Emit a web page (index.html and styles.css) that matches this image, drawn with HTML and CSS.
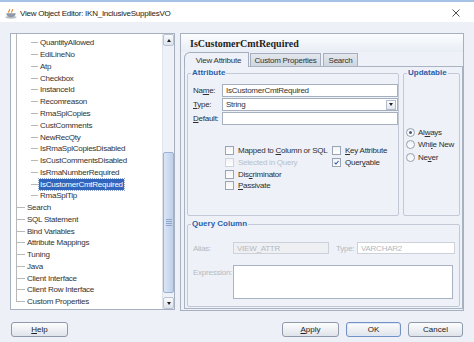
FILE: index.html
```html
<!DOCTYPE html>
<html lang="en">
<head>
    <meta charset="UTF-8">
    <title>View Object Editor</title>
    <link rel="stylesheet" href="styles.css">
</head>
<body>
    <div class="window">
        <div class="titlebar">
            <svg class="app-icon" viewBox="0 0 12 11">
                <ellipse cx="6" cy="9.3" rx="5.6" ry="1.4" fill="#b9c0c9"/>
                <path d="M1.2 5.2 H10.8 C10.6 8 8.5 9.2 6 9.2 C3.5 9.2 1.4 8 1.2 5.2 Z" fill="#8f99a6"/>
                <path d="M3.6 4.6 C3.2 3.2 5 2.8 4.6 1.2 M6.6 4.6 C6.2 3.2 8 2.8 7.6 1.2" stroke="#e07a1c" stroke-width="1.1" fill="none"/>
            </svg>
            <span class="title">View Object Editor: IKN_InclusiveSuppliesVO</span>
            <svg class="close" viewBox="0 0 8 8">
                <path d="M0.5 0.5 L7.5 7.5 M7.5 0.5 L0.5 7.5" stroke="#505050" stroke-width="1"/>
            </svg>
        </div>

        <div class="main">
            <div class="tree">
                <ul class="nodes">
                    <li class="child">QuantityAllowed</li>
                    <li class="child">EdiLineNo</li>
                    <li class="child">Atp</li>
                    <li class="child">Checkbox</li>
                    <li class="child">InstanceId</li>
                    <li class="child">Recomreason</li>
                    <li class="child">RmaSplCopies</li>
                    <li class="child">CustComments</li>
                    <li class="child">NewRecQty</li>
                    <li class="child">IsRmaSplCopiesDisabled</li>
                    <li class="child">IsCustCommentsDisabled</li>
                    <li class="child">IsRmaNumberRequired</li>
                    <li class="child"><span class="selected">IsCustomerCmtRequired</span></li>
                    <li class="child">RmaSplTip</li>
                    <li>Search</li>
                    <li>SQL Statement</li>
                    <li>Bind Variables</li>
                    <li>Attribute Mappings</li>
                    <li>Tuning</li>
                    <li>Java</li>
                    <li>Client Interface</li>
                    <li>Client Row Interface</li>
                    <li>Custom Properties</li>
                </ul>
                <div class="scrollbar">
                    <div class="sb-btn up"></div>
                    <div class="sb-track"><div class="sb-thumb"><span></span></div></div>
                    <div class="sb-btn down"></div>
                </div>
            </div>

            <div class="editor">
                <div class="editor-head">IsCustomerCmtRequired</div>
                <div class="tabs">
                    <span class="tab active">View Attribute</span>
                    <span class="tab props">Custom Properties</span>
                    <span class="tab search">Search</span>
                </div>
                <div class="panel">
                    <div class="top-row">
                        <fieldset class="group attr">
                            <legend>Attribute</legend>
                            <div class="field first">
                                <label>Na<u>m</u>e:</label>
                                <div class="input">IsCustomerCmtRequired</div>
                            </div>
                            <div class="field">
                                <label><u>T</u>ype:</label>
                                <div class="input combo">String<span class="drop"></span></div>
                            </div>
                            <div class="field">
                                <label><u>D</u>efault:</label>
                                <div class="input"></div>
                            </div>
                            <div class="checks">
                                <div class="check"><span class="box"></span><span>Mapped to <u>C</u>olumn or SQL</span></div>
                                <div class="check"><span class="box"></span><span><u>K</u>ey Attribute</span></div>
                                <div class="check disabled"><span class="box"></span><span>Selected in Query</span></div>
                                <div class="check"><span class="box on"><svg viewBox="0 0 9 9"><path d="M2 4.6 L3.8 6.4 L7.1 2.6" stroke="#2552a0" stroke-width="1.3" fill="none"/></svg></span><span>Quer<u>y</u>able</span></div>
                                <div class="check"><span class="box"></span><span>Dis<u>c</u>riminator</span></div>
                                <div class="check"></div>
                                <div class="check"><span class="box"></span><span><u>P</u>assivate</span></div>
                            </div>
                        </fieldset>
                        <fieldset class="group updatable">
                            <legend>Updatable</legend>
                            <div class="radios">
                                <div class="radio"><span class="dot on"></span><span>Al<u>w</u>ays</span></div>
                                <div class="radio"><span class="dot"></span><span>Whi<u>l</u>e New</span></div>
                                <div class="radio"><span class="dot"></span><span>Ne<u>v</u>er</span></div>
                            </div>
                        </fieldset>
                    </div>
                    <fieldset class="group query">
                        <legend>Query Column</legend>
                        <div class="qrow">
                            <label class="qlabel">Alias:</label>
                            <div class="input dim alias">VIEW_ATTR</div>
                            <label class="qlabel type">Type:</label>
                            <div class="input dim sqltype">VARCHAR2</div>
                        </div>
                        <div class="qrow expr">
                            <label class="qlabel">Expression:</label>
                            <div class="textarea"></div>
                        </div>
                    </fieldset>
                </div>
            </div>
        </div>

        <div class="footer">
            <button class="btn"><u>H</u>elp</button>
            <div class="actions">
                <button class="btn apply"><u>A</u>pply</button>
                <button class="btn ok">OK</button>
                <button class="btn cancel">Cancel</button>
            </div>
        </div>
    </div>
</body>
</html>
```

FILE: styles.css
```css
* {
    margin: 0;
    padding: 0;
    box-sizing: border-box;
}

body {
    width: 474px;
    height: 342px;
    overflow: hidden;
    background: #edf0f6;
    font-family: "Liberation Sans", Arial, sans-serif;
    font-size: 8px;
    letter-spacing: -0.25px;
    color: #2e2e2e;
}

u {
    text-decoration: underline;
    text-underline-offset: 1px;
}

.window {
    border-top: 2px solid #a6c2e7;
}

/* title bar */
.titlebar {
    height: 20px;
    background: #fff;
    display: flex;
    align-items: center;
    padding: 2px 14px 0 5px;
}

.app-icon {
    width: 12px;
    height: 11px;
    margin-right: 3px;
}

.title {
    flex: 1;
    color: #222;
}

.close {
    width: 8px;
    height: 8px;
}

.main {
    display: flex;
    gap: 5px;
    padding: 11px 0 0 10px;
}

/* navigator tree */
.tree {
    width: 165px;
    height: 277px;
    border: 1px solid #a7b0bf;
    background: #fff;
    display: flex;
}

.nodes {
    list-style: none;
    flex: 1;
    padding-top: 3px;
    overflow: hidden;
    background: linear-gradient(#b8b8b8, #b8b8b8) 5px 0 / 1px 268px no-repeat;
}

.nodes li {
    height: 11.77px;
    display: flex;
    align-items: center;
    white-space: nowrap;
    color: #333;
}

.nodes li::before {
    content: "";
    flex: none;
    width: 8px;
    border-top: 1px solid #b8b8b8;
    margin: 0 2px 0 6px;
}

.nodes li.child::before {
    width: 7px;
    margin-left: 20px;
}

.selected {
    background: #3165be;
    color: #fff;
    line-height: 11px;
    padding: 0 1px;
    margin-left: -1px;
    outline: 1px dotted #8fa6cc;
}

.scrollbar {
    width: 12px;
    display: flex;
    flex-direction: column;
    background: #eef2f8;
    border-left: 1px solid #dfe4ec;
}

.sb-btn {
    height: 12px;
    border: 1px solid #bac4d3;
    border-radius: 2px;
    background: linear-gradient(#f9fafc, #dde3ec);
    display: flex;
    align-items: center;
    justify-content: center;
}

.sb-btn::after {
    content: "";
    border-left: 2.5px solid transparent;
    border-right: 2.5px solid transparent;
}

.sb-btn.up::after {
    border-bottom: 3px solid #222;
}

.sb-btn.down::after {
    border-top: 3px solid #222;
}

.sb-track {
    flex: 1;
    padding-top: 106px;
}

.sb-thumb {
    height: 141px;
    border: 1px solid #9db1d3;
    border-radius: 2px;
    background: linear-gradient(to right, #dbe5f5, #bfd0ec);
    display: flex;
    align-items: center;
    justify-content: center;
}

.sb-thumb span {
    width: 6px;
    height: 7px;
    background: repeating-linear-gradient(#8ea4c8 0 1px, transparent 1px 2px);
}

/* attribute editor */
.editor {
    width: 284px;
    height: 278px;
    border: 1px solid #a7b0bf;
    background: #eef2f8;
    display: flex;
    flex-direction: column;
}

.editor-head {
    height: 18px;
    flex: none;
    display: flex;
    align-items: center;
    padding-left: 9px;
    font: bold 10px "Liberation Serif", "Times New Roman", serif;
    letter-spacing: 0;
    color: #1e1e1e;
    background: linear-gradient(#fbfcfe, #e8edf5);
}

.tabs {
    height: 14px;
    flex: none;
    display: flex;
    align-items: flex-end;
    margin-left: 3px;
}

.tab {
    height: 13px;
    border: 1px solid #a4aebe;
    border-bottom: 0;
    background: linear-gradient(#e3e7ed, #d0d6e0);
    display: flex;
    align-items: center;
    justify-content: center;
    color: #333;
}

.tab.active {
    width: 65px;
    height: 15px;
    margin-bottom: -1px;
    padding-left: 4px;
    background: #eef2f8;
    border-top-left-radius: 6px;
    position: relative;
    z-index: 1;
}

.tab.props {
    width: 71px;
    margin-left: 1px;
}

.tab.search {
    width: 35px;
    margin-left: 2px;
}

.panel {
    flex: 1;
    margin: 0 0 1px 3px;
    border: 1px solid #aab3c2;
    padding: 1px 2px 0 2px;
}

.top-row {
    display: flex;
    gap: 4px;
}

.group {
    min-width: 0;
    border: 1px solid #c2c9d5;
    border-radius: 2px;
    padding: 0;
}

.group legend {
    margin-left: 3px;
    padding: 0 1px;
    line-height: 10px;
    font-weight: bold;
    letter-spacing: 0;
    color: #2d5ea9;
}

.attr {
    width: 212px;
    height: 148px;
}

.updatable {
    width: 57px;
    height: 148px;
}

.field {
    display: flex;
    align-items: center;
    height: 13px;
    margin-bottom: 1px;
    padding-left: 5px;
}

.field.first {
    margin-top: 6px;
}

.field label {
    width: 29px;
    flex: none;
}

.input {
    flex: 1;
    height: 13px;
    border: 1px solid #a6afbd;
    background: #fff;
    padding-left: 3px;
    display: flex;
    align-items: center;
    color: #333;
}

.combo {
    justify-content: space-between;
    padding-right: 1px;
}

.drop {
    width: 10px;
    height: 10px;
    border: 1px solid #b4bccb;
    background: linear-gradient(#fbfcfd, #e1e6ee);
    display: flex;
    align-items: center;
    justify-content: center;
}

.drop::after {
    content: "";
    border-left: 2.5px solid transparent;
    border-right: 2.5px solid transparent;
    border-top: 3px solid #222;
}

.checks {
    display: grid;
    grid-template-columns: 107px auto;
    grid-auto-rows: 11.7px;
    margin-top: 20px;
    padding-left: 37px;
}

.check {
    display: flex;
    align-items: center;
    gap: 4px;
    white-space: nowrap;
}

.check.disabled {
    color: #b9bec6;
}

.box {
    width: 9px;
    height: 9px;
    flex: none;
    border: 1px solid #9aa4b3;
    background: linear-gradient(#f1f3f6, #fff);
    display: flex;
}

.check.disabled .box {
    border-color: #d0d5dc;
}

.box svg {
    width: 7px;
    height: 7px;
}

.radios {
    margin-top: 48px;
    padding-left: 2px;
}

.radio {
    height: 12.5px;
    display: flex;
    align-items: center;
    gap: 3px;
    white-space: nowrap;
}

.dot {
    width: 9px;
    height: 9px;
    flex: none;
    border: 1px solid #95a0b0;
    border-radius: 50%;
    background: linear-gradient(#eef1f5, #fff);
    display: flex;
    align-items: center;
    justify-content: center;
}

.dot.on::after {
    content: "";
    width: 3px;
    height: 3px;
    border-radius: 50%;
    background: #4b5a72;
}

.query {
    width: 273px;
    height: 88px;
    margin-top: 3px;
}

.qrow {
    display: flex;
    align-items: center;
    padding-left: 5px;
    margin-top: 13px;
    color: #b4b9c1;
}

.qrow.expr {
    align-items: flex-start;
    margin-top: 11px;
}

.qlabel {
    width: 40px;
    flex: none;
}

.expr .qlabel {
    padding-top: 3px;
}

.qlabel.type {
    width: 21px;
    margin-left: 7px;
}

.input.dim {
    flex: none;
    height: 12px;
    border-color: #cdd2da;
    color: #b4b9c1;
}

.alias {
    width: 96px;
    background: #eef0f4;
}

.sqltype {
    width: 98px;
}

.textarea {
    width: 220px;
    height: 34px;
    border: 1px solid #a9b2c0;
    background: #fff;
}

/* buttons */
.footer {
    display: flex;
    justify-content: space-between;
    margin-top: 11px;
    padding: 0 11px 0 11px;
}

.actions {
    display: flex;
    gap: 7px;
}

.btn {
    width: 57px;
    height: 15px;
    border: 1px solid #8e99aa;
    border-radius: 3px;
    background: linear-gradient(#fdfdfe, #dfe3ea);
    font: inherit;
    color: #222;
}

.btn.ok,
.btn.cancel {
    width: 55px;
}

.btn.ok {
    border-color: #7391c2;
    box-shadow: inset 0 0 0 1px #dce7f7;
}
```
